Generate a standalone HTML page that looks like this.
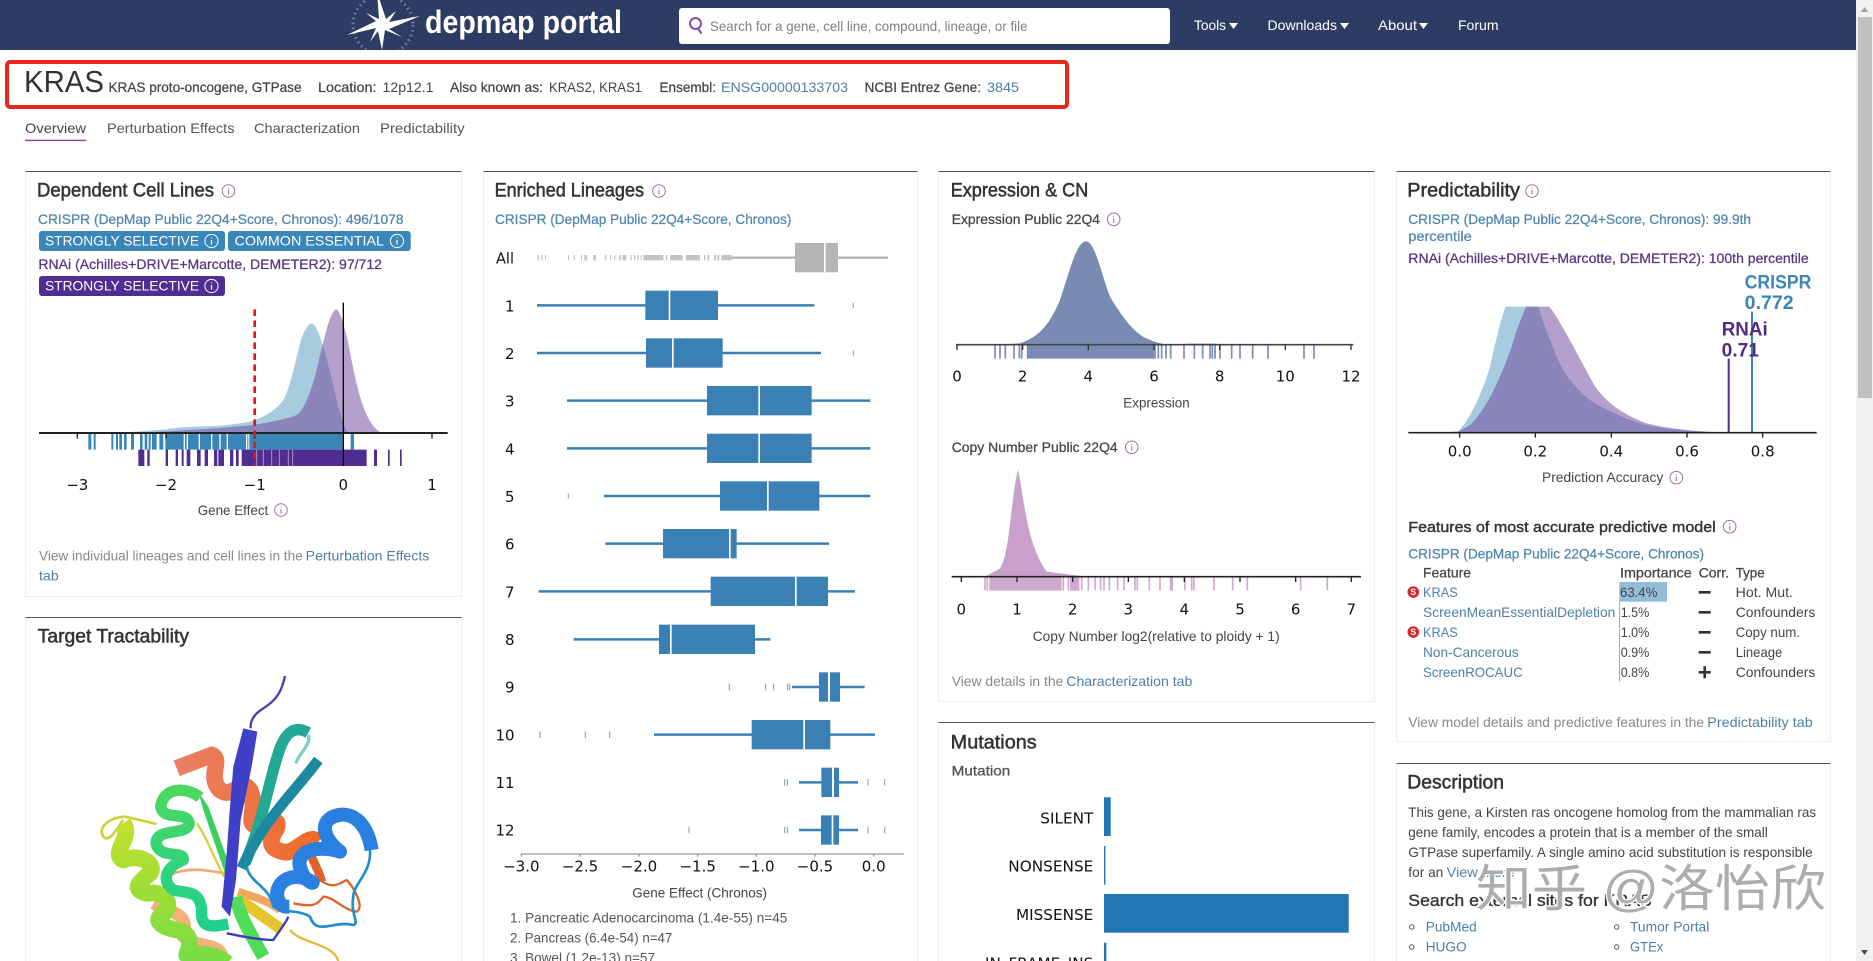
<!DOCTYPE html>
<html lang="en">
<head>
<meta charset="utf-8">
<title>KRAS DepMap Gene Summary</title>
<style>
html,body{margin:0;padding:0;background:#fff;width:1873px;height:961px;overflow:hidden}
#root{position:relative;width:1873px;height:961px;overflow:hidden;background:#fff}
#nav{position:absolute;left:0;top:0;width:1856px;height:50px;background:#2c3c63}
#search{position:absolute;left:679px;top:8px;width:491px;height:36px;background:#fff;border-radius:3px}
.card{position:absolute;box-sizing:border-box;border:1px solid #efefef;border-top:1px solid #555;background:#fff}
#track{position:absolute;left:1856px;top:0;width:17px;height:961px;background:#f1f1f1}
#thumb{position:absolute;left:1858px;top:17px;width:14px;height:381px;background:#c1c1c1}
svg#o{position:absolute;left:0;top:0;display:block}
text{font-family:"Liberation Sans",sans-serif;fill:#444;font-size:14px}
.d{font-family:"DejaVu Sans",sans-serif;fill:#111;font-size:15px}
.m{text-anchor:middle}
.h{font-size:19px;fill:#333;stroke:#333;stroke-width:.5px}
.w{fill:#fff}
.b{fill:#4f86ad;stroke:#4f86ad;stroke-width:.25px}
.p{fill:#573480;stroke:#573480;stroke-width:.25px}
.l{fill:#4f7ea5}
.g{fill:#888}
.s{fill:#444;stroke:#444;stroke-width:.25px}
.bt{fill:#fff;font-size:14px}
</style>
</head>
<body>
<div id="root">
<div id="nav"><div id="search"></div></div>
<div class="card" style="left:25px;top:171px;width:437px;height:426px"></div>
<div class="card" style="left:25px;top:617px;width:437px;height:360px"></div>
<div class="card" style="left:483px;top:171px;width:435px;height:810px"></div>
<div class="card" style="left:938px;top:171px;width:437px;height:531px"></div>
<div class="card" style="left:938px;top:722px;width:437px;height:260px"></div>
<div class="card" style="left:1396px;top:171px;width:435px;height:571px"></div>
<div class="card" style="left:1396px;top:763px;width:435px;height:220px"></div>
<div id="track"></div><div id="thumb"></div>

<svg id="o" width="1873" height="961" viewBox="0 0 1873 961" xmlns="http://www.w3.org/2000/svg">
<defs>
<g id="i"><circle r="6.3" fill="none" stroke="#9c6fa3" stroke-width="1"/><path d="M0-3.4v.9M0-1V3.4" stroke="#9c6fa3" stroke-width="1.1" fill="none"/></g>
<g id="iw"><circle r="6.6" fill="none" stroke="#fff" stroke-width="1"/><path d="M0-3.6v1M0-1V3.6" stroke="#fff" stroke-width="1.2" fill="none"/></g>
<g id="sb"><circle r="5.8" fill="#d9252f"/><text x="0" y="3.2" text-anchor="middle" style="font-size:9px;font-weight:bold;fill:#fff">S</text></g>
<clipPath id="navclip"><rect x="0" y="0" width="1856" height="50"/></clipPath>
<linearGradient id="lime" gradientUnits="userSpaceOnUse" x1="0" y1="590" x2="0" y2="1023"><stop offset="0" stop-color="#c6e02c"/><stop offset="1" stop-color="#78dc44"/></linearGradient>
<linearGradient id="grn" gradientUnits="userSpaceOnUse" x1="0" y1="510" x2="0" y2="930"><stop offset="0" stop-color="#4bd860"/><stop offset="1" stop-color="#1fd08e"/></linearGradient>
<linearGradient id="org" gradientUnits="userSpaceOnUse" x1="520" y1="0" x2="960" y2="0"><stop offset="0" stop-color="#e98068"/><stop offset="1" stop-color="#f06a24"/></linearGradient>
</defs>

<!-- logo -->
<g clip-path="url(#navclip)">
<circle cx="383" cy="25" r="30" fill="none" stroke="#7f7ca6" stroke-width="3" stroke-dasharray="1.5 3.5"/>
<polygon fill="#fff" points="377,-8 386,19 396,11 389,22 420,16 389,29 402,37 385,30 382,50 378,31 370,42 376,28 347,35 376,21 366,13 379,19"/>
</g>
<text x="425" y="33" textLength="197" lengthAdjust="spacingAndGlyphs" style="font-size:32px;font-weight:bold;fill:#fff">depmap portal</text>
<circle cx="695.5" cy="23.5" r="5.5" fill="none" stroke="#8a4f9e" stroke-width="2"/>
<path d="M698 28.5L701.5 33.5" stroke="#8a4f9e" stroke-width="2.2" fill="none"/>
<text x="710" y="31" textLength="317.5" lengthAdjust="spacingAndGlyphs" style="fill:#808080;font-size:14px">Search for a gene, cell line, compound, lineage, or file</text>
<text class="w" x="1194" y="30" textLength="32" lengthAdjust="spacingAndGlyphs">Tools</text>
<polygon fill="#fff" points="1229,23 1238,23 1233.5,29"/>
<text class="w" x="1267.5" y="30" textLength="69.5" lengthAdjust="spacingAndGlyphs">Downloads</text>
<polygon fill="#fff" points="1340,23 1349,23 1344.5,29"/>
<text class="w" x="1378" y="30" textLength="39" lengthAdjust="spacingAndGlyphs">About</text>
<polygon fill="#fff" points="1419,23 1428,23 1423.5,29"/>
<text class="w" x="1458" y="30" textLength="40.5" lengthAdjust="spacingAndGlyphs">Forum</text>

<!-- gene header -->
<rect x="7" y="62" width="1060" height="45" rx="3" fill="none" stroke="#e8261c" stroke-width="4"/>
<text x="24" y="92" textLength="80" lengthAdjust="spacingAndGlyphs" style="font-size:31px;fill:#333">KRAS</text>
<text class="s" x="108.5" y="92" textLength="193" lengthAdjust="spacingAndGlyphs">KRAS proto-oncogene, GTPase</text>
<text class="s" x="318" y="92" textLength="58.5" lengthAdjust="spacingAndGlyphs">Location:</text>
<text x="382.5" y="92" textLength="51" lengthAdjust="spacingAndGlyphs">12p12.1</text>
<text class="s" x="450" y="92" textLength="93" lengthAdjust="spacingAndGlyphs">Also known as:</text>
<text x="549" y="92" textLength="93" lengthAdjust="spacingAndGlyphs">KRAS2, KRAS1</text>
<text class="s" x="659.5" y="92" textLength="56.5" lengthAdjust="spacingAndGlyphs">Ensembl:</text>
<text class="l" x="721" y="92" textLength="127" lengthAdjust="spacingAndGlyphs">ENSG00000133703</text>
<text class="s" x="864.5" y="92" textLength="116.5" lengthAdjust="spacingAndGlyphs">NCBI Entrez Gene:</text>
<text class="l" x="987" y="92" textLength="32" lengthAdjust="spacingAndGlyphs">3845</text>

<!-- tabs -->
<text x="25" y="133" textLength="61" lengthAdjust="spacingAndGlyphs" style="fill:#444">Overview</text>
<rect x="25" y="139.7" width="61" height="1.4" fill="#8a3f9a"/>
<text x="107" y="133" textLength="127.5" lengthAdjust="spacingAndGlyphs" style="fill:#555">Perturbation Effects</text>
<text x="254" y="133" textLength="106" lengthAdjust="spacingAndGlyphs" style="fill:#555">Characterization</text>
<text x="380" y="133" textLength="84.6" lengthAdjust="spacingAndGlyphs" style="fill:#555">Predictability</text>

<!-- Dependent cell lines -->
<text class="h" x="37" y="196.5" textLength="177" lengthAdjust="spacingAndGlyphs">Dependent Cell Lines</text>
<use href="#i" x="228.5" y="191"/>
<text class="b" x="38" y="224" textLength="365.5" lengthAdjust="spacingAndGlyphs">CRISPR (DepMap Public 22Q4+Score, Chronos): 496/1078</text>
<rect x="39" y="231" width="186" height="20" rx="3" fill="#3a86b8"/>
<text class="bt" x="45" y="245.7" textLength="154" lengthAdjust="spacingAndGlyphs">STRONGLY SELECTIVE</text>
<use href="#iw" x="211.5" y="241"/>
<rect x="228" y="231" width="182.7" height="20" rx="3" fill="#3a86b8"/>
<text class="bt" x="234.5" y="245.7" textLength="149.5" lengthAdjust="spacingAndGlyphs">COMMON ESSENTIAL</text>
<use href="#iw" x="397" y="241"/>
<text class="p" x="38.4" y="269" textLength="343.6" lengthAdjust="spacingAndGlyphs">RNAi (Achilles+DRIVE+Marcotte, DEMETER2): 97/712</text>
<rect x="39" y="276" width="186" height="20" rx="3" fill="#4f2d91"/>
<text class="bt" x="45" y="290.7" textLength="154" lengthAdjust="spacingAndGlyphs">STRONGLY SELECTIVE</text>
<use href="#iw" x="211.5" y="286"/>

<g transform="translate(0,300) scale(.33333)">
<path fill="#a7cbdf" d="M350 399L500 388C530 380 600 380 650 378C700 374 740 368 760 362C790 352 830 330 850 300C870 265 885 190 900 130C910 95 925 70 935 70C948 72 960 110 970 140C985 190 1000 260 1010 300C1020 345 1035 385 1045 399Z"/>
<path fill="#6e459b" fill-opacity=".51" d="M400 399C450 397 530 392 600 388C660 384 710 380 760 375C800 368 860 358 890 345C910 335 930 280 945 230C960 170 975 100 985 70C995 40 1003 28 1010 28C1020 32 1035 85 1045 130C1060 210 1075 280 1090 320C1105 360 1125 395 1150 399Z"/>
<path fill="none" stroke="#3a86b8" stroke-width="50" d="M265 424H274M281 424H287M334 424H340M348 424H354M358 424H366M372 424H380M393 424H402M420 424H428M434 424H442M446 424H452M456 424H470M478 424H490M496 424H551M555 424H560M564 424H596M600 424H633M637 424H658M662 424H680M684 424H738M742 424H745M748 424H1028M1052 424H1062"/>
<path fill="none" stroke="#4f2d91" stroke-width="49" d="M415 473.5H433M442 473.5H449M497 473.5H504M527 473.5H534M545 473.5H551M560 473.5H571M591 473.5H602M614 473.5H624M642 473.5H652M655 473.5H672M690 473.5H700M708 473.5H716M725 473.5H1100M1122 473.5H1131M1164 473.5H1169M1200 473.5H1205"/>
<path fill="none" stroke="#a990c8" stroke-width="3" d="M770 449V498M790 449V498M815 449V498M838 449V498M865 449V498M878 449V498"/>
<path fill="none" stroke="#222" stroke-width="6" d="M117 399H1343"/>
<path fill="none" stroke="#222" stroke-width="4" d="M232 399V416M498 399V416M764 399V416M1296 399V416"/>
<path fill="none" stroke="#000" stroke-width="4" d="M1030 8V498"/>
<path fill="none" stroke="#e3151f" stroke-width="8" stroke-dasharray="20 13" d="M764 28V498"/>
</g>
<text class="d m" x="77.3" y="490">−3</text>
<text class="d m" x="166" y="490">−2</text>
<text class="d m" x="254.7" y="490">−1</text>
<text class="d m" x="343.3" y="490">0</text>
<text class="d m" x="432" y="490">1</text>
<text x="197.7" y="515" textLength="70.6" lengthAdjust="spacingAndGlyphs">Gene Effect</text>
<use href="#i" x="281" y="510"/>
<text class="g" x="39" y="560.7" textLength="263.7" lengthAdjust="spacingAndGlyphs">View individual lineages and cell lines in the</text>
<text class="l" x="305.7" y="560.7" textLength="123.6" lengthAdjust="spacingAndGlyphs">Perturbation Effects</text>
<text class="l" x="39" y="580.7" textLength="19.7" lengthAdjust="spacingAndGlyphs">tab</text>

<!-- Target tractability -->
<text class="h" x="37.7" y="642.7" textLength="151.3" lengthAdjust="spacingAndGlyphs">Target Tractability</text>
<g transform="translate(0,620) scale(.33333)" fill="none" stroke-linecap="butt" stroke-linejoin="round">
<path stroke="#f4b27a" stroke-width="38" d="M460 850C520 880 570 880 550 950C600 990 670 960 670 1030"/>
<path stroke="#f0a878" stroke-width="8" d="M510 765C560 740 620 750 675 760"/>
<path stroke="#d8d040" stroke-width="7" d="M590 610C620 650 640 710 672 770"/>
<path stroke="url(#org)" stroke-width="50" d="M530 445L635 405C670 420 620 470 660 510C700 540 720 470 750 510C775 570 735 610 770 618C810 620 840 585 830 625C805 665 805 690 860 697C900 690 925 640 955 665"/>
<path stroke="#e05f2a" stroke-width="26" d="M930 700C945 735 960 760 965 785"/>
<path stroke="#e0642a" stroke-width="7" d="M960 780C1000 810 1020 790 1040 780C1060 800 1095 860 1070 875C1030 870 1000 830 970 830C950 860 930 860 880 850"/>
<path stroke="#f0a860" stroke-width="24" d="M715 815C760 830 800 840 840 870"/>
<path stroke="#e6c42c" stroke-width="34" d="M710 835C750 860 790 890 840 925"/>
<path stroke="#4fdc5a" stroke-width="40" d="M708 830C715 880 750 940 790 1010"/>
<path stroke="#e8b840" stroke-width="7" d="M870 930C900 970 1000 970 1015 1023"/>
<path stroke="#c8d23a" stroke-width="8" d="M470 612L375 590C335 590 290 620 310 650C330 670 350 625 370 600"/>
<path stroke="url(#lime)" stroke-width="50" d="M370 610C400 650 330 700 370 720C420 700 470 730 450 760C410 790 400 810 440 820C500 810 520 860 490 880C460 900 480 920 530 930C580 940 570 980 560 1005C600 1000 650 1000 680 1030"/>
<path fill="#3ccf60" stroke="none" d="M595 515L625 560L690 740L675 760L610 570Z"/>
<path stroke="url(#grn)" stroke-width="34" d="M600 532C560 500 490 500 482 560C490 605 560 570 568 610C560 650 470 620 468 670C480 720 555 690 550 720C500 740 480 780 520 810C560 820 600 810 605 870C600 930 640 920 685 912"/>
<path fill="#3f3fc8" stroke="none" d="M730 325L772 335L755 440L722 600L708 780L690 890L665 860L680 700L690 560L700 440Z"/>
<path stroke="#4a3fb0" stroke-width="7" d="M855 168C845 215 830 240 790 265C765 280 750 300 752 325"/>
<path stroke="#22a894" stroke-width="34" d="M925 338C885 315 855 335 835 400C805 490 790 600 735 730"/>
<path stroke="#7cd0c8" stroke-width="10" d="M925 345C935 375 895 400 888 430"/>
<path stroke="#1b8aa0" stroke-width="32" d="M955 420C880 520 790 600 725 745"/>
<path stroke="#2090c8" stroke-width="8" d="M1110 690C1115 760 1060 790 1060 830C1050 880 1080 910 1060 915C1000 900 950 950 930 890C900 870 860 880 820 860C810 800 750 790 740 740"/>
<path stroke="#2a80e0" stroke-width="42" d="M1115 690C1100 600 1050 570 1000 590C955 610 975 660 1020 695C980 680 900 680 898 730C905 785 950 795 935 785C880 750 825 785 832 830C840 865 860 860 868 860"/>
<path stroke="#3a3ac0" stroke-width="7" d="M680 940C730 950 780 960 820 960C840 930 860 905 865 890"/>
</g>

<!-- Enriched lineages -->
<text class="h" x="494.6" y="196.5" textLength="149.4" lengthAdjust="spacingAndGlyphs">Enriched Lineages</text>
<use href="#i" x="659" y="191"/>
<text class="b" x="495" y="224" textLength="296.4" lengthAdjust="spacingAndGlyphs">CRISPR (DepMap Public 22Q4+Score, Chronos)</text>
<g transform="translate(480,230) scale(.33333)">
<path fill="none" stroke="#c4c4c4" stroke-width="16" d="M173 83h4M184 83h4M195 83h3M264 83h3M282 83h3M303 83h3M313 83h8M340 83h8M375 83h4M390 83h3M403 83h3M418 83h5M428 83h10M452 83h3M462 83h4M472 83h4M482 83h3M490 83H550M558 83h4M570 83H608M618 83H660M672 83h4M682 83h6M702 83h6M712 83h6M724 83H755"/>
<path fill="none" stroke="#b5b5b5" stroke-width="7" d="M755 83H1224"/>
<rect x="945" y="39" width="129" height="88" fill="#b5b5b5"/><rect x="1032" y="39" width="5" height="88" fill="#fff"/>
<g fill="none" stroke="#3a80b4" stroke-width="7.5">
<path d="M171 226H1003M171 369H1023M261 512H1171M261 655H1171M372 798H1171M376 941H1047M176 1084H1125M281 1228H871M936 1371H1154M522 1514H1185M957 1657H1134M957 1800H1134"/>
</g>
<g fill="#3a80b4">
<rect x="496" y="182" width="218" height="88"/>
<rect x="498" y="325" width="230" height="88"/>
<rect x="681" y="468" width="314" height="88"/>
<rect x="681" y="611" width="314" height="88"/>
<rect x="720" y="754" width="298" height="88"/>
<rect x="549" y="897" width="221" height="88"/>
<rect x="692" y="1040" width="352" height="88"/>
<rect x="537" y="1184" width="288" height="88"/>
<rect x="1017" y="1327" width="63" height="88"/>
<rect x="815" y="1470" width="236" height="88"/>
<rect x="1024" y="1613" width="53" height="88"/>
<rect x="1023" y="1756" width="54" height="88"/>
</g>
<g fill="#fff">
<rect x="566" y="182" width="5" height="88"/>
<rect x="576" y="325" width="5" height="88"/>
<rect x="835" y="468" width="5" height="88"/>
<rect x="835" y="611" width="5" height="88"/>
<rect x="861" y="754" width="5" height="88"/>
<rect x="747" y="897" width="5" height="88"/>
<rect x="945" y="1040" width="5" height="88"/>
<rect x="570" y="1184" width="5" height="88"/>
<rect x="1044" y="1327" width="6" height="88"/>
<rect x="970" y="1470" width="5" height="88"/>
<rect x="1056" y="1613" width="6" height="88"/>
<rect x="1055" y="1756" width="5" height="88"/>
</g>
<path fill="none" stroke="#8ea9bd" stroke-width="3.5" d="M1120 218v16M1120 361v16M265 790v16M748 1361v20M857 1361v20M881 1361v20M923 1361v20M929 1361v20M180 1504v20M316 1504v20M389 1504v20M914 1647v20M922 1647v20M1164 1647v20M1214 1647v20M627 1790v20M914 1790v20M922 1790v20M1164 1790v20M1214 1790v20"/>
<path fill="none" stroke="#999" stroke-width="4" d="M124 1872H1272M124 1872v8M300 1872v8M477 1872v8M653 1872v8M829 1872v8M1005 1872v8M1181 1872v8"/>
</g>
<text class="d" x="496" y="263.5" textLength="18" lengthAdjust="spacingAndGlyphs">All</text>
<text class="d" x="505" y="311.5">1</text>
<text class="d" x="505" y="359">2</text>
<text class="d" x="505" y="406.5">3</text>
<text class="d" x="505" y="454.5">4</text>
<text class="d" x="505" y="502">5</text>
<text class="d" x="505" y="549.5">6</text>
<text class="d" x="505" y="597.5">7</text>
<text class="d" x="505" y="645">8</text>
<text class="d" x="505" y="692.5">9</text>
<text class="d" x="495.5" y="740.5">10</text>
<text class="d" x="495.5" y="788">11</text>
<text class="d" x="495.5" y="835.5">12</text>
<text class="d m" x="521.3" y="871.7">−3.0</text>
<text class="d m" x="580" y="871.7">−2.5</text>
<text class="d m" x="639" y="871.7">−2.0</text>
<text class="d m" x="697.7" y="871.7">−1.5</text>
<text class="d m" x="756.3" y="871.7">−1.0</text>
<text class="d m" x="815" y="871.7">−0.5</text>
<text class="d m" x="873.7" y="871.7">0.0</text>
<text x="632.3" y="897.7" textLength="134.7" lengthAdjust="spacingAndGlyphs">Gene Effect (Chronos)</text>
<text x="510" y="922.7" textLength="277.3" lengthAdjust="spacingAndGlyphs" style="fill:#555">1. Pancreatic Adenocarcinoma (1.4e-55) n=45</text>
<text x="510" y="942.7" textLength="162.3" lengthAdjust="spacingAndGlyphs" style="fill:#555">2. Pancreas (6.4e-54) n=47</text>
<text x="510" y="962.7" textLength="145" lengthAdjust="spacingAndGlyphs" style="fill:#555">3. Bowel (1.2e-13) n=57</text>

<!-- Expression and CN -->
<text class="h" x="950.7" y="196.5" textLength="137.6" lengthAdjust="spacingAndGlyphs">Expression &amp; CN</text>
<text class="s" x="951.7" y="224" textLength="148.3" lengthAdjust="spacingAndGlyphs">Expression Public 22Q4</text>
<use href="#i" x="1113.7" y="219.3"/>
<g transform="translate(930,170) scale(.33333)">
<path fill="#7a8bb3" d="M210 524L270 520C330 500 360 460 390 390C420 300 440 214 468 214C495 215 510 300 540 380C570 430 610 490 650 505C670 515 690 520 710 524L860 524L860 521L780 521L710 524Z"/>
<path fill="none" stroke="#7a8bb3" stroke-width="42" d="M300 545H672"/>
<path fill="none" stroke="#7a8bb3" stroke-width="5" d="M195 524V566M210 524V566M226 524V566M252 524V566M268 524V566M275 524V566M293 524V566M298 524V566M675 524V566M685 524V566M695 524V566M708 524V566M722 524V566M762 524V566M793 524V566M818 524V566M840 524V566M847 524V566M855 524V566M870 524V566M905 524V566M930 524V566M968 524V566M1014 524V566M1122 524V566M1152 524V566"/>
<path fill="none" stroke="#444" stroke-width="5" d="M78 524H1270"/>
<path fill="none" stroke="#333" stroke-width="4" d="M81 524v16M278 524v16M475 524v16M672 524v16M869 524v16M1066 524v16M1263 524v16"/>
</g>
<text class="d m" x="957" y="381.7">0</text>
<text class="d m" x="1022.7" y="381.7">2</text>
<text class="d m" x="1088.3" y="381.7">4</text>
<text class="d m" x="1154" y="381.7">6</text>
<text class="d m" x="1219.7" y="381.7">8</text>
<text class="d m" x="1285.3" y="381.7">10</text>
<text class="d m" x="1351" y="381.7">12</text>
<text x="1123.3" y="407.7" textLength="66.4" lengthAdjust="spacingAndGlyphs">Expression</text>
<text class="s" x="951.7" y="452" textLength="166" lengthAdjust="spacingAndGlyphs">Copy Number Public 22Q4</text>
<use href="#i" x="1131.7" y="447.3"/>
<g transform="translate(930,170) scale(.33333)">
<path fill="#c9a0c9" d="M165 1220L210 1195C240 1150 240 1000 264 898C285 1000 290 1120 350 1205L470 1220Z"/>
<path fill="none" stroke="#cfa8d0" stroke-width="42" d="M178 1241H395M420 1241H448"/>
<path fill="none" stroke="#cfa8d0" stroke-width="5" d="M165 1220V1261M172 1220V1261M400 1220V1261M415 1220V1261M455 1220V1261M475 1220V1261M495 1220V1261M512 1220V1261M522 1220V1261M538 1220V1261M563 1220V1261M582 1220V1261M615 1220V1261M622 1220V1261M658 1220V1261M690 1220V1261M722 1220V1261M727 1220V1261M765 1220V1261M785 1220V1261M792 1220V1261M852 1220V1261M908 1220V1261M952 1220V1261M1112 1220V1261M1192 1220V1261"/>
<path fill="none" stroke="#222" stroke-width="5" d="M65 1220H1293"/>
<path fill="none" stroke="#222" stroke-width="4" d="M94 1220v16M261 1220v16M428 1220v16M595 1220v16M763 1220v16M930 1220v16M1097 1220v16M1264 1220v16"/>
</g>
<text class="d m" x="961.3" y="614.3">0</text>
<text class="d m" x="1017" y="614.3">1</text>
<text class="d m" x="1072.7" y="614.3">2</text>
<text class="d m" x="1128.3" y="614.3">3</text>
<text class="d m" x="1184.3" y="614.3">4</text>
<text class="d m" x="1240" y="614.3">5</text>
<text class="d m" x="1295.7" y="614.3">6</text>
<text class="d m" x="1351.3" y="614.3">7</text>
<text x="1032.7" y="641" textLength="247" lengthAdjust="spacingAndGlyphs">Copy Number log2(relative to ploidy + 1)</text>
<text class="g" x="951.7" y="686" textLength="111.6" lengthAdjust="spacingAndGlyphs">View details in the</text>
<text class="l" x="1066.3" y="686" textLength="126" lengthAdjust="spacingAndGlyphs">Characterization tab</text>

<!-- Mutations -->
<text class="h" x="950.7" y="748.7" textLength="86" lengthAdjust="spacingAndGlyphs">Mutations</text>
<text class="s" x="951.7" y="775.7" textLength="58.6" lengthAdjust="spacingAndGlyphs" style="fill:#555">Mutation</text>
<rect x="1104" y="797.3" width="6.7" height="38.7" fill="#2277b4"/>
<rect x="1104" y="846" width="1.4" height="38.7" fill="#2277b4"/>
<rect x="1104" y="894" width="244.7" height="38.7" fill="#2277b4"/>
<rect x="1104" y="942.7" width="2.4" height="30" fill="#2277b4"/>
<text class="d" x="1040.3" y="823.3" textLength="53" lengthAdjust="spacingAndGlyphs">SILENT</text>
<text class="d" x="1008.3" y="871.7" textLength="85" lengthAdjust="spacingAndGlyphs">NONSENSE</text>
<text class="d" x="1016" y="920" textLength="77.3" lengthAdjust="spacingAndGlyphs">MISSENSE</text>
<text class="d" x="985" y="968.5" textLength="108.3" lengthAdjust="spacingAndGlyphs">IN_FRAME_INS</text>

<!-- Predictability -->
<text class="h" x="1407.3" y="196.5" textLength="112.7" lengthAdjust="spacingAndGlyphs">Predictability</text>
<use href="#i" x="1532" y="191"/>
<text class="b" x="1408.3" y="224" textLength="342.7" lengthAdjust="spacingAndGlyphs">CRISPR (DepMap Public 22Q4+Score, Chronos): 99.9th</text>
<text class="b" x="1408.3" y="241" textLength="63.4" lengthAdjust="spacingAndGlyphs">percentile</text>
<text class="p" x="1408.3" y="263" textLength="400.4" lengthAdjust="spacingAndGlyphs">RNAi (Achilles+DRIVE+Marcotte, DEMETER2): 100th percentile</text>
<g transform="translate(1390,170) scale(.33333)">
<path fill="#a7cbdf" d="M165 788L205 783C240 750 280 660 300 590C320 500 335 440 347 410L445 410C455 445 480 510 500 560C520 610 560 660 600 690C640 715 700 745 750 760C800 775 900 785 1000 788Z"/>
<path fill="#6e459b" fill-opacity=".51" d="M200 788L240 765C290 720 350 590 380 480L408 410L478 410C510 450 560 550 610 640C640 690 690 730 770 760C850 780 950 785 1000 788Z"/>
<path fill="none" stroke="#4f2d85" stroke-width="6" d="M1016 566V788"/>
<path fill="none" stroke="#3d85b5" stroke-width="6" d="M1086 425V788"/>
<path fill="none" stroke="#222" stroke-width="5" d="M55 788H1280"/>
<path fill="none" stroke="#222" stroke-width="4" d="M209 788v15M436 788v15M664 788v15M891 788v15M1118 788v15"/>
</g>
<text x="1744.7" y="288.3" textLength="66.7" lengthAdjust="spacingAndGlyphs" style="font-size:19px;font-weight:bold;fill:#3d85b5">CRISPR</text>
<text x="1744.7" y="309" textLength="49" lengthAdjust="spacingAndGlyphs" style="font-size:19px;font-weight:bold;fill:#3d85b5">0.772</text>
<text x="1721.7" y="335.7" textLength="46" lengthAdjust="spacingAndGlyphs" style="font-size:19px;font-weight:bold;fill:#4f2d85">RNAi</text>
<text x="1721.7" y="356.7" textLength="37.3" lengthAdjust="spacingAndGlyphs" style="font-size:19px;font-weight:bold;fill:#4f2d85">0.71</text>
<text class="d m" x="1459.7" y="456.7">0.0</text>
<text class="d m" x="1535.3" y="456.7">0.2</text>
<text class="d m" x="1611.3" y="456.7">0.4</text>
<text class="d m" x="1687" y="456.7">0.6</text>
<text class="d m" x="1762.7" y="456.7">0.8</text>
<text x="1542" y="482" textLength="121.3" lengthAdjust="spacingAndGlyphs">Prediction Accuracy</text>
<use href="#i" x="1676.3" y="477.7"/>

<text x="1408.3" y="532" textLength="307.4" lengthAdjust="spacingAndGlyphs" style="font-size:14.5px;fill:#333;stroke:#333;stroke-width:.4px">Features of most accurate predictive model</text>
<use href="#i" x="1729.7" y="526.7"/>
<text class="b" x="1408.3" y="558.3" textLength="295.7" lengthAdjust="spacingAndGlyphs">CRISPR (DepMap Public 22Q4+Score, Chronos)</text>
<text class="s" x="1423" y="577.3" textLength="48" lengthAdjust="spacingAndGlyphs">Feature</text>
<text class="s" x="1620" y="577.3" textLength="71.7" lengthAdjust="spacingAndGlyphs">Importance</text>
<text class="s" x="1698.7" y="577.3" textLength="30.3" lengthAdjust="spacingAndGlyphs">Corr.</text>
<text class="s" x="1735.7" y="577.3" textLength="29" lengthAdjust="spacingAndGlyphs">Type</text>
<rect x="1619.3" y="582" width="47.7" height="19.7" fill="#92bdd8"/>
<rect x="1619" y="601.7" width="1" height="80" fill="#8ab5d0"/>
<use href="#sb" x="1413.3" y="592"/>
<use href="#sb" x="1413.3" y="632"/>
<text class="l" x="1423" y="597" textLength="34.7" lengthAdjust="spacingAndGlyphs">KRAS</text>
<text class="l" x="1423" y="617" textLength="192.3" lengthAdjust="spacingAndGlyphs">ScreenMeanEssentialDepletion</text>
<text class="l" x="1423" y="637" textLength="34.7" lengthAdjust="spacingAndGlyphs">KRAS</text>
<text class="l" x="1423" y="657" textLength="95.7" lengthAdjust="spacingAndGlyphs">Non-Cancerous</text>
<text class="l" x="1423" y="677" textLength="99.7" lengthAdjust="spacingAndGlyphs">ScreenROCAUC</text>
<text x="1620" y="597" textLength="37.3" lengthAdjust="spacingAndGlyphs">63.4%</text>
<text x="1620.7" y="617" textLength="28.6" lengthAdjust="spacingAndGlyphs">1.5%</text>
<text x="1620.7" y="637" textLength="28.6" lengthAdjust="spacingAndGlyphs">1.0%</text>
<text x="1620.7" y="657" textLength="28.6" lengthAdjust="spacingAndGlyphs">0.9%</text>
<text x="1620.7" y="677" textLength="28.6" lengthAdjust="spacingAndGlyphs">0.8%</text>
<path fill="#333" d="M1698.7 591h12v2.6h-12zM1698.7 611h12v2.6h-12zM1698.7 631h12v2.6h-12zM1698.7 651h12v2.6h-12zM1698.7 671h12v2.6h-12zM1703.4 666.3h2.6v12h-2.6z"/>
<text x="1735.7" y="597" textLength="57.3" lengthAdjust="spacingAndGlyphs">Hot. Mut.</text>
<text x="1735.7" y="617" textLength="79.6" lengthAdjust="spacingAndGlyphs">Confounders</text>
<text x="1735.7" y="637" textLength="64.3" lengthAdjust="spacingAndGlyphs">Copy num.</text>
<text x="1735.7" y="657" textLength="46.6" lengthAdjust="spacingAndGlyphs">Lineage</text>
<text x="1735.7" y="677" textLength="79.6" lengthAdjust="spacingAndGlyphs">Confounders</text>
<text class="g" x="1408.3" y="727" textLength="295.7" lengthAdjust="spacingAndGlyphs">View model details and predictive features in the</text>
<text class="l" x="1707.3" y="727" textLength="105.4" lengthAdjust="spacingAndGlyphs">Predictability tab</text>

<!-- Description -->
<text class="h" x="1407.3" y="788.7" textLength="96.7" lengthAdjust="spacingAndGlyphs">Description</text>
<text x="1408.3" y="817" textLength="407.7" lengthAdjust="spacingAndGlyphs">This gene, a Kirsten ras oncogene homolog from the mammalian ras</text>
<text x="1408.3" y="837" textLength="359.4" lengthAdjust="spacingAndGlyphs">gene family, encodes a protein that is a member of the small</text>
<text x="1408.3" y="857" textLength="404.4" lengthAdjust="spacingAndGlyphs">GTPase superfamily. A single amino acid substitution is responsible</text>
<text x="1408.3" y="877" textLength="35" lengthAdjust="spacingAndGlyphs">for an</text>
<text class="l" x="1446.7" y="877" textLength="68" lengthAdjust="spacingAndGlyphs">View more</text>
<text x="1408.3" y="906" textLength="243.4" lengthAdjust="spacingAndGlyphs" style="font-size:17px;fill:#333;stroke:#333;stroke-width:.35px">Search external sites for KRAS</text>
<circle cx="1411.7" cy="927" r="2.2" fill="none" stroke="#555" stroke-width="1"/>
<circle cx="1411.7" cy="947" r="2.2" fill="none" stroke="#555" stroke-width="1"/>
<circle cx="1616.7" cy="927" r="2.2" fill="none" stroke="#555" stroke-width="1"/>
<circle cx="1616.7" cy="947" r="2.2" fill="none" stroke="#555" stroke-width="1"/>
<text class="l" x="1425.7" y="931.7" textLength="51" lengthAdjust="spacingAndGlyphs">PubMed</text>
<text class="l" x="1425.7" y="951.7" textLength="41" lengthAdjust="spacingAndGlyphs">HUGO</text>
<text class="l" x="1630" y="931.7" textLength="79.3" lengthAdjust="spacingAndGlyphs">Tumor Portal</text>
<text class="l" x="1630" y="951.7" textLength="33.3" lengthAdjust="spacingAndGlyphs">GTEx</text>

<!-- watermark -->
<text x="1476" y="906" textLength="350" lengthAdjust="spacingAndGlyphs" style="font-family:'Liberation Sans','Noto Sans CJK SC',sans-serif;font-size:50px;fill:#adadad;stroke:#fff;stroke-width:2.5px;paint-order:stroke">知乎 @洛怡欣</text>

<!-- scrollbar arrows -->
<polygon fill="#a3a3a3" points="1861,12 1868,12 1864.5,7"/>
<polygon fill="#505050" points="1861,950 1868,950 1864.5,955"/>
</svg>
</div>
</body>
</html>
